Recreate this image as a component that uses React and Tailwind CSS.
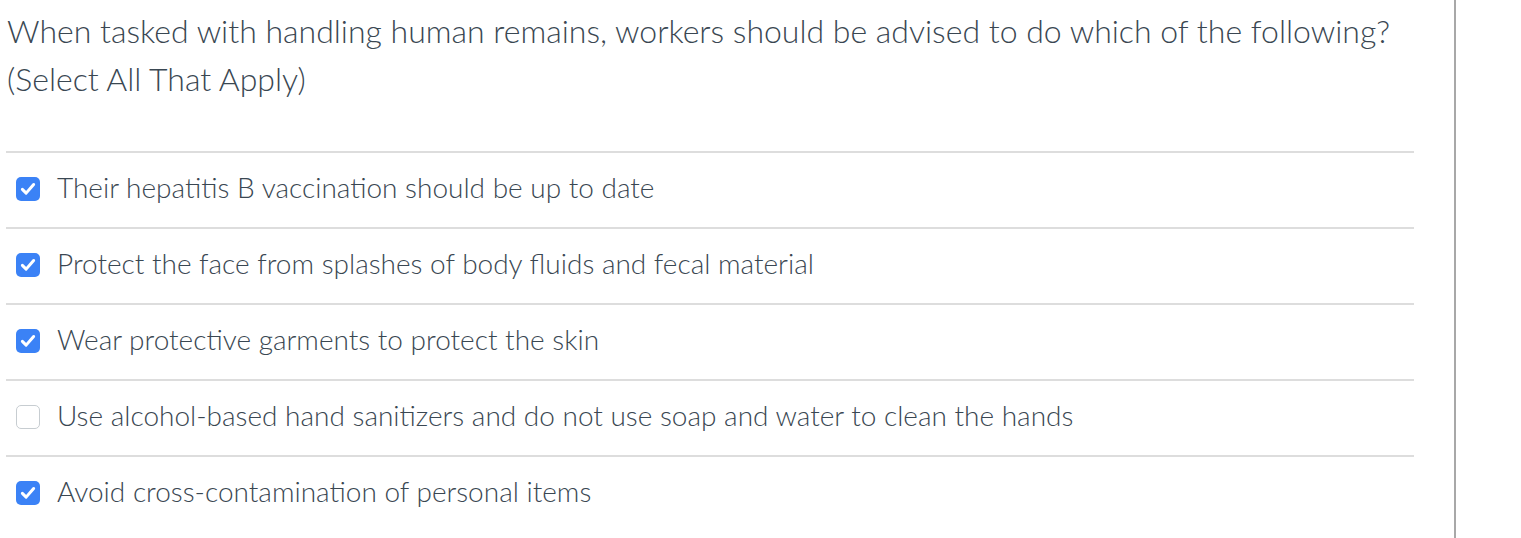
import React from 'react';

const options = [
  { text: 'Their hepatitis B vaccination should be up to date', checked: true },
  { text: 'Protect the face from splashes of body fluids and fecal material', checked: true },
  { text: 'Wear protective garments to protect the skin', checked: true },
  { text: 'Use alcohol-based hand sanitizers and do not use soap and water to clean the hands', checked: false },
  { text: 'Avoid cross-contamination of personal items', checked: true },
];

function Checkbox({ checked }) {
  if (checked) {
    return (
      <span className="flex h-[24px] w-[24px] shrink-0 items-center justify-center rounded-[5px] bg-[#3b82f6]">
        <svg viewBox="0 0 24 24" className="h-[18px] w-[18px]" fill="none" stroke="white" strokeWidth="4" strokeLinecap="round" strokeLinejoin="round">
          <path d="M4.5 12.5l5 5L19.5 6" />
        </svg>
      </span>
    );
  }
  return <span className="h-[24px] w-[24px] shrink-0 rounded-[5px] border border-[#c7cdd1] bg-white" />;
}

export default function App() {
  return (
    <div className="min-h-[538px] bg-white font-['Lato',sans-serif] text-[#3a4752]">
      <div className="min-h-[538px] w-[1456px] border-r-2 border-[#a8a8a8]">
        <div className="pl-[7px] pt-[7px] text-[32px] font-light leading-[48px]">
          <p>When tasked with handling human remains, workers should be advised to do which of the following?</p>
          <p>(Select All That Apply)</p>
        </div>
        <div className="mt-[48px] w-[1414px] pl-[6px]">
          {options.map((o) => (
            <div key={o.text} className="flex h-[76px] items-center gap-[17px] border-t-2 border-[#dddddd] pb-[3px] pl-[10px]">
              <Checkbox checked={o.checked} />
              <span className="pb-[4px] text-[28px] font-light leading-[36px]">{o.text}</span>
            </div>
          ))}
        </div>
      </div>
    </div>
  );
}
